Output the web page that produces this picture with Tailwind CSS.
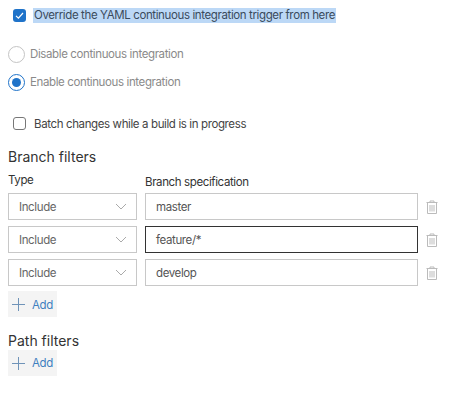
<!DOCTYPE html>
<html lang="en">
<head>
  <meta charset="UTF-8">
  <title>Triggers</title>
  <script src="https://cdn.jsdelivr.net/npm/@tailwindcss/browser@4"></script>
</head>
<body class="bg-white font-['Inter',sans-serif] text-[11.5px] tracking-[-0.38px] text-[#444] w-[474px] h-[406px] overflow-hidden">
<div class="pl-2 pt-2 w-[474px]">

  <!-- override -->
  <div class="flex items-center h-[15px] pl-[5px]">
    <span class="w-[13px] h-[13px] rounded-[3px] bg-[#1f73c9] flex items-center justify-center">
      <svg width="9" height="9" viewBox="0 0 9 9" fill="none" stroke="white" stroke-width="1.2"><path d="M1 4.8 3.4 7.2 8 2"/></svg>
    </span>
    <span class="ml-[7px] px-px h-[15px] leading-[15px] bg-[#bcd8f6] text-[#3a4a5c] whitespace-nowrap">Override the YAML continuous integration trigger from here</span>
  </div>

  <!-- radios -->
  <div class="flex items-center h-[17px] mt-[23px] text-[#8a8a8a]">
    <span class="w-[17px] h-[17px] rounded-full border border-[#c4c4c4]"></span>
    <span class="ml-[5px]">Disable continuous integration</span>
  </div>
  <div class="flex items-center h-[17px] mt-[11px] text-[#8a8a8a]">
    <span class="w-[17px] h-[17px] rounded-full border border-[#1f73c9] flex items-center justify-center">
      <span class="w-[9px] h-[9px] rounded-full bg-[#1f73c9]"></span>
    </span>
    <span class="ml-[5px]">Enable continuous integration</span>
  </div>

  <!-- batch -->
  <div class="flex items-center h-[15px] mt-[25px] pl-[5px]">
    <span class="w-[13px] h-[13px] rounded-[3px] border border-[#777]"></span>
    <span class="ml-2 pt-[2px] text-[#444]">Batch changes while a build is in progress</span>
  </div>

  <h2 class="text-[14px] tracking-normal leading-[18px] text-[#333] mt-[17px]">Branch filters</h2>

  <div class="grid grid-cols-[129px_273px_30px] gap-x-2 gap-y-[6px] mt-[7px] items-center">
    <div class="self-start h-[14px] leading-[14px] text-[#333]">Type</div>
    <div class="self-start h-[14px] leading-[14px] text-[#333] mt-[2px] -mb-[2px] col-span-2">Branch specification</div>

    <div class="flex items-center justify-between h-[27px] border border-[#c8c8c8] pl-[10px] pr-[9px] text-[#666]">
      <span class="pt-[2px]">Include</span>
      <svg width="12" height="7" viewBox="0 0 12 7" fill="none" stroke="#aaa"><path d="M1 1 6 6 11 1"/></svg>
    </div>
    <div class="flex items-center h-[27px] border border-[#c8c8c8] pl-[10px] pt-[2px] text-[#555]">master</div>
    <svg width="12" height="14" viewBox="0 0 12 14" fill="none" stroke="#bbb"><path d="M0.5 2.5H11.5M4 2.5V1H8V2.5M1.5 2.5V13.5H10.5V2.5M4 5V11.5M6 5V11.5M8 5V11.5"/></svg>

    <div class="flex items-center justify-between h-[27px] border border-[#c8c8c8] pl-[10px] pr-[9px] text-[#666]">
      <span class="pt-[2px]">Include</span>
      <svg width="12" height="7" viewBox="0 0 12 7" fill="none" stroke="#aaa"><path d="M1 1 6 6 11 1"/></svg>
    </div>
    <div class="flex items-center h-[27px] border border-[#333] pl-[10px] pt-[2px] text-[#555]">feature/*</div>
    <svg width="12" height="14" viewBox="0 0 12 14" fill="none" stroke="#bbb"><path d="M0.5 2.5H11.5M4 2.5V1H8V2.5M1.5 2.5V13.5H10.5V2.5M4 5V11.5M6 5V11.5M8 5V11.5"/></svg>

    <div class="flex items-center justify-between h-[27px] border border-[#c8c8c8] pl-[10px] pr-[9px] text-[#666]">
      <span class="pt-[2px]">Include</span>
      <svg width="12" height="7" viewBox="0 0 12 7" fill="none" stroke="#aaa"><path d="M1 1 6 6 11 1"/></svg>
    </div>
    <div class="flex items-center h-[27px] border border-[#c8c8c8] pl-[10px] pt-[2px] text-[#555]">develop</div>
    <svg width="12" height="14" viewBox="0 0 12 14" fill="none" stroke="#bbb"><path d="M0.5 2.5H11.5M4 2.5V1H8V2.5M1.5 2.5V13.5H10.5V2.5M4 5V11.5M6 5V11.5M8 5V11.5"/></svg>
  </div>

  <button class="flex items-center w-[49px] h-[26px] mt-[5px] bg-[#f4f4f4] pl-1 text-[#3f7fc0]">
    <svg width="13" height="13" viewBox="0 0 13 13" fill="none" stroke="#6f93b8"><path d="M6.5 0V13M0 6.5H13"/></svg>
    <span class="ml-[7px] pt-[3px]">Add</span>
  </button>

  <h2 class="text-[14px] tracking-normal leading-[18px] text-[#333] mt-[15px]">Path filters</h2>

  <button class="flex items-center w-[49px] h-[26px] bg-[#f4f4f4] pl-1 text-[#3f7fc0]">
    <svg width="13" height="13" viewBox="0 0 13 13" fill="none" stroke="#6f93b8"><path d="M6.5 0V13M0 6.5H13"/></svg>
    <span class="ml-[7px] pt-[2px]">Add</span>
  </button>
</div>
</body>
</html>
